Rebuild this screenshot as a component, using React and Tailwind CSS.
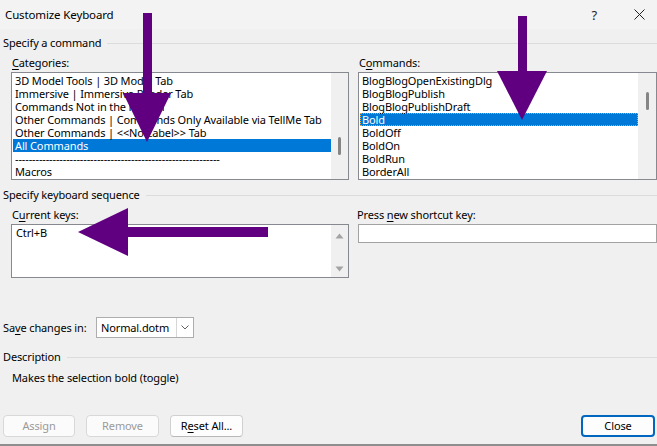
import React from "react";

function U({ children }) {
  return <span className="underline underline-offset-[2px] decoration-[1px]">{children}</span>;
}

function Row({ children, selected, focus }) {
  if (selected) {
    return (
      <div
        className={
          "h-[13px] leading-[13px] pl-[2px] bg-[#0078d7] text-white whitespace-nowrap " +
          (focus ? "outline-dotted outline-1 outline-[#f0a23c] -outline-offset-1" : "")
        }
      >
        {children}
      </div>
    );
  }
  return <div className="h-[13px] leading-[13px] pl-[2px] whitespace-nowrap text-black">{children}</div>;
}

function GroupHeader({ children }) {
  return (
    <div className="flex items-center h-[14px] pl-[3px]">
      <span className="leading-[14px] text-black whitespace-nowrap">{children}</span>
      <div className="flex-1 h-px bg-[#dcdcdc] ml-[6px]" />
    </div>
  );
}

export default function App() {
  const dashes = "-".repeat(60);
  return (
    <div className="relative w-[657px] h-[446px] overflow-hidden bg-[#f0f0f0] flex flex-col font-['Segoe_UI','Noto_Sans',sans-serif] text-[11px] tracking-[-0.13px] text-black">
      {/* Title bar */}
      <div className="h-[29px] shrink-0 flex items-center justify-between bg-[#f3f3f3] pl-[5px]">
        <span className="text-[11.5px] leading-[14px] text-black">Customize Keyboard</span>
        <div className="flex items-center h-full">
          <span className="text-[13px] leading-[14px] text-[#222] mr-[37px]">?</span>
          <svg width="11" height="11" viewBox="0 0 11 11" className="mr-[12px]">
            <path d="M0.5 0.5 L10.5 10.5 M10.5 0.5 L0.5 10.5" stroke="#222" strokeWidth="1" fill="none" />
          </svg>
        </div>
      </div>

      {/* Specify a command */}
      <div className="mt-[7px]">
        <GroupHeader>Specify a command</GroupHeader>
      </div>

      <div className="mt-[6px] grid grid-cols-[338px_299px] gap-x-[9px] pl-[11px]">
        <div className="flex flex-col">
          <div className="leading-[14px] pl-[1px]">
            <U>C</U>ategories:
          </div>
          <div className="mt-[2px] h-[108px] border border-[#868a90] bg-white flex">
            <div className="flex-1 pt-[1px] pl-[1px] overflow-hidden">
              <Row>3D Model Tools | 3D Model Tab</Row>
              <Row>Immersive | Immersive Reader Tab</Row>
              <Row>Commands Not in the Ribbon</Row>
              <Row>Other Commands | Commands Only Available via TellMe Tab</Row>
              <Row>Other Commands | &lt;&lt;No Label&gt;&gt; Tab</Row>
              <Row selected>All Commands</Row>
              <Row>{dashes}</Row>
              <Row>Macros</Row>
            </div>
            <div className="w-[17px] bg-[#f0f0f0] flex justify-center pt-[64px]">
              <div className="w-[3px] h-[18px] rounded-full bg-[#858585]" />
            </div>
          </div>
        </div>
        <div className="flex flex-col">
          <div className="leading-[14px] pl-[1px]">
            C<U>o</U>mmands:
          </div>
          <div className="mt-[2px] h-[108px] border border-[#868a90] bg-white flex">
            <div className="flex-1 pt-[1px] pl-[1px] overflow-hidden">
              <Row>BlogBlogOpenExistingDlg</Row>
              <Row>BlogBlogPublish</Row>
              <Row>BlogBlogPublishDraft</Row>
              <Row selected focus>Bold</Row>
              <Row>BoldOff</Row>
              <Row>BoldOn</Row>
              <Row>BoldRun</Row>
              <Row>BorderAll</Row>
            </div>
            <div className="w-[18px] bg-[#f0f0f0] flex justify-center pt-[19px]">
              <div className="w-[3px] h-[18px] rounded-full bg-[#858585]" />
            </div>
          </div>
        </div>
      </div>

      {/* Specify keyboard sequence */}
      <div className="mt-[8px]">
        <GroupHeader>Specify keyboard sequence</GroupHeader>
      </div>

      <div className="mt-[6px] grid grid-cols-[338px_299px] gap-x-[9px] pl-[11px]">
        <div className="flex flex-col">
          <div className="leading-[14px] pl-[1px]">
            C<U>u</U>rrent keys:
          </div>
          <div className="mt-[2px] h-[54px] border border-[#868a90] bg-white flex">
            <div className="flex-1 pl-[4px] pt-[1px] leading-[14px]">Ctrl+B</div>
            <div className="w-[17px] bg-[#f0f0f0] flex flex-col items-center justify-between pt-[8px] pb-[5px]">
              <svg width="9" height="6" viewBox="0 0 9 6">
                <path d="M4.5 0.5 L8.5 5.5 L0.5 5.5 Z" fill="#a3a3a3" />
              </svg>
              <svg width="9" height="6" viewBox="0 0 9 6">
                <path d="M0.5 0.5 L8.5 0.5 L4.5 5.5 Z" fill="#a3a3a3" />
              </svg>
            </div>
          </div>
        </div>
        <div className="flex flex-col">
          <div className="leading-[14px] -ml-px">
            Press <U>n</U>ew shortcut key:
          </div>
          <div className="mt-[2px] h-[19px] border border-[#a2a2a2] bg-white" />
        </div>
      </div>

      {/* Save changes in */}
      <div className="mt-[39px] h-[21px] flex items-center pl-[3px]">
        <span className="w-[93px] leading-[14px] whitespace-nowrap">
          Sa<U>v</U>e changes in:
        </span>
        <div className="w-[98px] h-[21px] border border-[#adadad] bg-white flex">
          <div className="flex-1 pl-[4px] flex items-center leading-[14px] text-[#000]">Normal.dotm</div>
          <div className="w-[17px] border-l border-[#d6d6d6] flex items-center justify-center">
            <svg width="8" height="5" viewBox="0 0 8 5">
              <path d="M0.5 0.5 L4 4 L7.5 0.5" stroke="#606060" strokeWidth="1" fill="none" />
            </svg>
          </div>
        </div>
      </div>

      {/* Description */}
      <div className="mt-[12px]">
        <GroupHeader>Description</GroupHeader>
      </div>
      <div className="mt-[7px] pl-[12px] leading-[14px]">Makes the selection bold (toggle)</div>

      {/* Buttons */}
      <div className="mt-[30px] h-[22px] flex items-center justify-between pl-[3px] pr-[2px]">
        <div className="flex items-center gap-[11px]">
          <div className="w-[72px] h-[22px] rounded-[4px] border border-[#d8d8d8] bg-[#fbfbfb] flex items-center justify-center text-[#9a9a9a]">
            Assign
          </div>
          <div className="w-[73px] h-[22px] rounded-[4px] border border-[#d8d8d8] bg-[#fbfbfb] flex items-center justify-center text-[#9a9a9a]">
            Remove
          </div>
          <div className="w-[73px] h-[22px] rounded-[4px] border border-[#d0d0d0] border-b-[#b8b8b8] bg-[#fdfdfd] flex items-center justify-center text-black">
            R<U>e</U>set All...
          </div>
        </div>
        <div className="w-[74px] h-[22px] rounded-[4px] border-2 border-[#0067c0] bg-[#fdfdfd] flex items-center justify-center text-black">
          Close
        </div>
      </div>

      <div className="mt-auto h-[2px] bg-[#8e8e8e]" />

      {/* Annotation arrows */}
      <svg className="absolute inset-0 pointer-events-none" width="657" height="446" viewBox="0 0 657 446">
        <rect x="143" y="13" width="9" height="81" fill="#600080" />
        <polygon points="123,93 171,93 147,142" fill="#600080" />
        <rect x="518" y="16" width="9" height="56" fill="#600080" />
        <polygon points="497,71 547,71 522,120" fill="#600080" />
        <rect x="127" y="227" width="141" height="10" fill="#600080" />
        <polygon points="78,232 128,208 128,256" fill="#600080" />
      </svg>
    </div>
  );
}
